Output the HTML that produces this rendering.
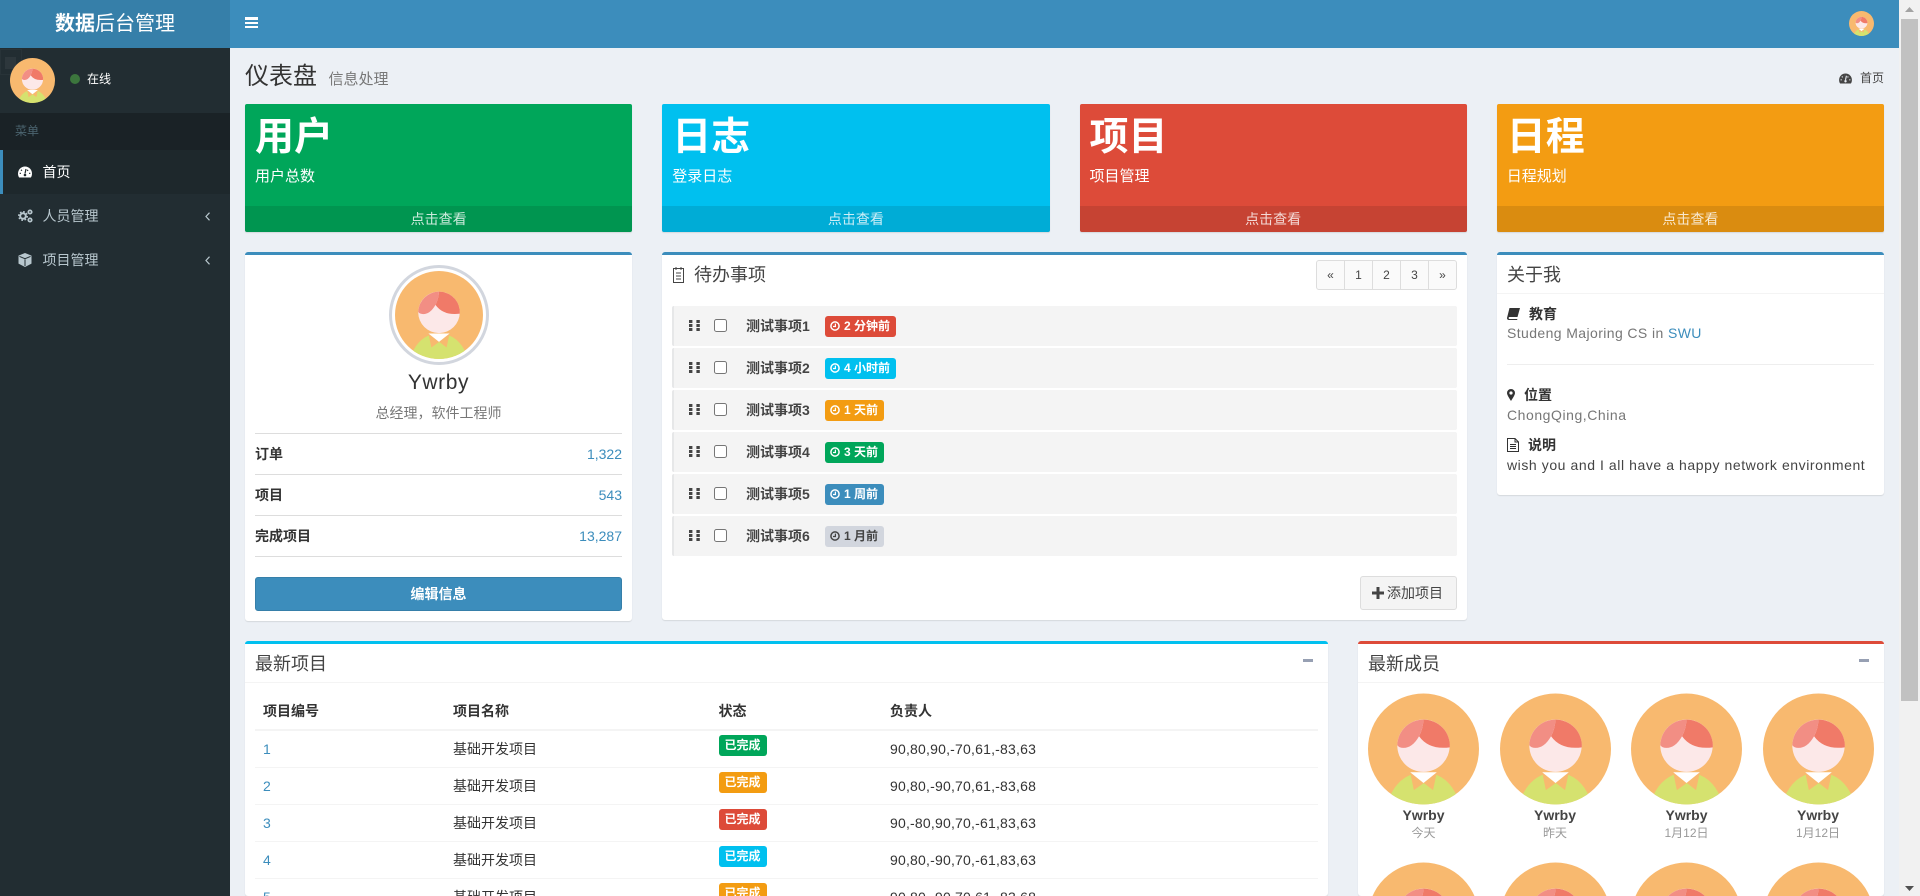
<!DOCTYPE html>
<html lang="zh-CN">
<head>
<meta charset="utf-8">
<title>数据后台管理</title>
<style>
*{box-sizing:border-box}
html,body{margin:0;padding:0;width:1920px;height:896px;overflow:hidden;background:#ecf0f5}
body{font-family:"Liberation Sans","Noto Sans CJK SC",sans-serif;font-size:14px;color:#333}
#p{position:absolute;left:0;top:0;width:1920px;height:896px;overflow:hidden;contain:paint}
.a{position:absolute}
.t{position:absolute;white-space:nowrap;line-height:20px;height:20px}
.cut{height:9px;overflow:hidden}
.c{text-align:center}
.r{text-align:right}
.b{font-weight:700}
.card{position:absolute;background:#fff;border-radius:3px;border-top:3px solid #3c8dbc;box-shadow:0 1px 1px rgba(0,0,0,.1)}
.sb{position:absolute;top:104px;height:128px;width:387.25px;border-radius:2px;box-shadow:0 1px 1px rgba(0,0,0,.1);color:#fff;overflow:hidden}
.sb h3{position:absolute;left:10px;top:12px;margin:0;font-size:39px;line-height:44px;font-weight:700;white-space:nowrap}
.sb p{position:absolute;left:10px;top:62px;margin:0;font-size:15px;line-height:22px;white-space:nowrap}
.sb div{position:absolute;left:0;right:0;top:102px;height:26px;line-height:26px;background:rgba(0,0,0,.1);color:rgba(255,255,255,.8);text-align:center;font-size:14px}
.line{position:absolute;height:1px;background:#ddd}
.line2{position:absolute;height:1px;background:#f4f4f4}
.item{position:absolute;left:672px;width:785px;height:40px;background:#f4f4f4;border-left:2px solid #e6e7e8;border-radius:2px}
.lb{position:absolute;height:21px;border-radius:3px;color:#fff;font-size:12px;font-weight:700;line-height:21px;white-space:nowrap}
.lb svg{position:absolute;left:5px;top:5px}
.lb span{position:absolute;left:19px;top:0}
.chk{position:absolute;left:714px;width:13px;height:13px;margin:0}
.pg{position:absolute;left:1316px;top:260px;width:141px;height:30px;display:flex;border:1px solid #ddd;border-radius:3px;background:#fafafa;color:#444;font-size:12px}
.pg span{flex:1;text-align:center;line-height:28px;border-left:1px solid #ddd}
.pg span:first-child{border-left:0}
.st{position:absolute;left:718.5px;width:48px;height:21px;border-radius:3px;color:#fff;font-size:12px;font-weight:700;line-height:21px;text-align:center;overflow:hidden}
.lnk{color:#3c8dbc}
.av{position:absolute;width:111px;height:112px}
.grey{color:#999}
.v{letter-spacing:.2px}
</style>
</head>
<body>
<div id="p">
<svg width="0" height="0" style="position:absolute">
<defs>
<symbol id="av" viewBox="0 0 100 100">
<clipPath id="cc"><circle cx="50" cy="50" r="50"/></clipPath>
<circle cx="50" cy="50" r="50" fill="#f8b96f"/>
<g clip-path="url(#cc)">
<path d="M17 100 Q24 77 42 72 L58 72 Q76 77 83 100Z" fill="#d5e26f"/>
<path d="M38 71 L41.3 87 L50.3 80.6 L58.6 87 L62 71Z" fill="#f8b96f"/>
<path d="M38 71 L62 71 L50 80.6Z" fill="#fff"/>
</g>
<circle cx="50" cy="47" r="23.6" fill="#fce8e8"/>
<path d="M50 23.500A23.700 23.700 0 0 1 73.700 48.500Q55 51 46 38.500Q49.500 32 50 23.500Z" fill="#f07a68"/>
<path d="M50 23.500Q49.500 32 46 38.500Q40 49 32 49Q28 49 26.400 46.500A23.700 23.700 0 0 1 50 23.500Z" fill="#f28e84"/>
</symbol>
<symbol id="ck" viewBox="0 0 10 10">
<circle cx="5" cy="5" r="4.100" fill="none" stroke="currentColor" stroke-width="1.500"/>
<path d="M5.400 2.600V5.500H3" fill="none" stroke="currentColor" stroke-width="1.200"/>
</symbol>
<symbol id="hd" viewBox="0 0 11 11">
<rect x="0" y="0" width="3.400" height="3" /><rect x="7.400" y="0" width="3.400" height="3"/>
<rect x="0" y="4" width="3.400" height="3"/><rect x="7.400" y="4" width="3.400" height="3"/>
<rect x="0" y="8" width="3.400" height="3"/><rect x="7.400" y="8" width="3.400" height="3"/>
</symbol>
<symbol id="dash" viewBox="0 0 14 12">
<path d="M7 0.500C3 0.500 0 3.800 0 7.600C0 9 .4 10.300 1.100 11.500H12.900C13.600 10.300 14 9 14 7.600C14 3.800 11 .5 7 .5Z" fill="currentColor"/>
<path d="M7 7.500L8 3M3 3.800l.9.9M1.700 7.400h1.200M11.100 7.400h1.200M10.100 3.900l-.9.9M5.700 2.200h.1" style="stroke:var(--h)" stroke-width="1.200" fill="none"/>
<circle cx="7" cy="9" r="1.300" style="fill:var(--h)"/>
</symbol>
</defs>
</svg>

<!-- sidebar -->
<div class="a" style="left:0;top:0;width:230px;height:896px;background:#222d32"></div>
<div class="a" style="left:0;top:0;width:230px;height:48px;background:#367fa9"></div>
<div class="a" style="left:230px;top:0;width:1669px;height:48px;background:#3c8dbc"></div>
<div class="t" style="left:55px;top:9px;height:30px;line-height:30px;font-size:20px;color:#fff"><b>数据</b>后台管理</div>
<div class="a" style="left:245px;top:17px;width:13px;height:2.500px;background:#fff"></div>
<div class="a" style="left:245px;top:21.500px;width:13px;height:2.500px;background:#fff"></div>
<div class="a" style="left:245px;top:25.500px;width:13px;height:2.500px;background:#fff"></div>
<svg class="a" style="left:1849px;top:11px" width="25" height="25"><use href="#av" width="25" height="25"/></svg>

<div class="a" style="left:0;top:49px;width:22px;height:26px;border:1px solid rgba(255,255,255,.03)"></div>
<div class="a" style="left:5px;top:57px;width:11px;height:12px;background:rgba(255,255,255,.05)"></div>
<svg class="a" style="left:10px;top:58px" width="45" height="45"><use href="#av" width="45" height="45"/></svg>
<div class="a" style="left:70px;top:74px;width:10px;height:10px;border-radius:50%;background:#3c763d"></div>
<div class="t" style="left:87px;top:69px;font-size:12px;color:#fff">在线</div>
<div class="a" style="left:0;top:113px;width:230px;height:37px;background:#1a2226"></div>
<div class="t" style="left:15px;top:121px;font-size:12px;color:#4b646f">菜单</div>
<div class="a" style="left:0;top:150px;width:230px;height:44px;background:#1e282c;border-left:3px solid #3c8dbc"></div>
<svg class="a" style="left:18px;top:166px;color:#fff;--h:#1e282c" width="14" height="12"><use href="#dash" width="14" height="12"/></svg>
<div class="t" style="left:42.500px;top:162px;color:#fff">首页</div>
<svg class="a" style="left:18px;top:209px" width="15" height="14" viewBox="0 0 15 14" fill="none" stroke="#b8c7ce">
<circle cx="5" cy="7" r="2.800" stroke-width="2"/>
<circle cx="5" cy="7" r="4.300" stroke-width="1.400" stroke-dasharray="1.700 1.670"/>
<circle cx="12" cy="3" r="1.700" stroke-width="1.700"/>
<circle cx="12" cy="11" r="1.700" stroke-width="1.700"/>
</svg>
<div class="t" style="left:42.500px;top:206px;color:#b8c7ce">人员管理</div>
<svg class="a" style="left:205px;top:212px" width="6" height="9" fill="none" stroke="#b8c7ce" stroke-width="1.200"><path d="M4.500 .7L1 4.500L4.500 8.300"/></svg>
<svg class="a" style="left:18px;top:253px" width="14" height="14" viewBox="0 0 14 14">
<path d="M7 0L13.500 2.600V10.600L7 14L.5 10.600V2.600Z" fill="#b8c7ce"/>
<path d="M7 6.400V13M1.500 3.400L7 5.700L12.500 3.400" stroke="#222d32" stroke-width="1" fill="none"/>
</svg>
<div class="t" style="left:42.500px;top:250px;color:#b8c7ce">项目管理</div>
<svg class="a" style="left:205px;top:256px" width="6" height="9" fill="none" stroke="#b8c7ce" stroke-width="1.200"><path d="M4.500 .7L1 4.500L4.500 8.300"/></svg>

<!-- page header -->
<div class="t" style="left:245px;top:62px;height:30px;line-height:30px;font-size:24px;color:#333">仪表盘</div>
<div class="t" style="left:328.500px;top:70px;font-size:15px;color:#777">信息处理</div>
<svg class="a" style="left:1839px;top:73px;color:#444;--h:#ecf0f5" width="13" height="11"><use href="#dash" width="13" height="11"/></svg>
<div class="t" style="left:1860px;top:68px;font-size:12px;color:#444">首页</div>

<!-- small boxes -->
<div class="sb" style="left:245px;background:#00a65a"><h3>用户</h3><p>用户总数</p><div>点击查看</div></div>
<div class="sb" style="left:662.250px;background:#00c0ef"><h3>日志</h3><p>登录日志</p><div>点击查看</div></div>
<div class="sb" style="left:1079.500px;background:#dd4b39"><h3>项目</h3><p>项目管理</p><div>点击查看</div></div>
<div class="sb" style="left:1496.750px;background:#f39c12"><h3>日程</h3><p>日程规划</p><div>点击查看</div></div>

<!-- profile -->
<div class="card" style="left:245px;top:252px;width:387px;height:369px"></div>
<div class="a" style="left:389px;top:265px;width:100px;height:100px;border-radius:50%;border:3px solid #d2d6de;padding:3px;background:#fff"><svg width="88" height="88" style="display:block"><use href="#av" width="88" height="88"/></svg></div>
<div class="t c" style="left:245px;width:387px;top:368px;height:30px;line-height:30px;font-size:21px;color:#333;letter-spacing:.6px">Ywrby</div>
<div class="t c" style="left:245px;width:387px;top:403px;color:#777">总经理，软件工程师</div>
<div class="line" style="left:255px;top:433px;width:367px"></div>
<div class="line" style="left:255px;top:474px;width:367px"></div>
<div class="line" style="left:255px;top:515px;width:367px"></div>
<div class="line" style="left:255px;top:556px;width:367px"></div>
<div class="t b" style="left:255px;top:444px">订单</div>
<div class="t b" style="left:255px;top:485px">项目</div>
<div class="t b" style="left:255px;top:526px">完成项目</div>
<div class="t r lnk" style="left:522px;width:100px;top:444px">1,322</div>
<div class="t r lnk" style="left:522px;width:100px;top:485px">543</div>
<div class="t r lnk" style="left:522px;width:100px;top:526px">13,287</div>
<div class="a c b" style="left:255px;top:577px;width:367px;height:34px;line-height:32px;background:#3c8dbc;border:1px solid #367fa9;border-radius:3px;color:#fff">编辑信息</div>

<!-- todo -->
<div class="card" style="left:662.250px;top:252px;width:804.750px;height:368px"></div>
<svg class="a" style="left:672px;top:267px" width="13" height="16" viewBox="0 0 13 16" fill="none" stroke="#444">
<rect x="1.500" y="1.500" width="10" height="14"/><path d="M4 0V3M9 0V3M4 6H9M4 9H9M4 12H9"/></svg>
<div class="t" style="left:694px;top:263px;height:24px;line-height:24px;font-size:18px;color:#444">待办事项</div>
<div class="pg"><span>«</span><span>1</span><span>2</span><span>3</span><span>»</span></div>

<div class="item" style="top:306px"></div>
<div class="item" style="top:348px"></div>
<div class="item" style="top:390px"></div>
<div class="item" style="top:432px"></div>
<div class="item" style="top:474px"></div>
<div class="item" style="top:516px"></div>

<svg class="a" style="left:689px;top:320px;fill:#444" width="11" height="11"><use href="#hd" width="11" height="11"/></svg>
<svg class="a" style="left:689px;top:362px;fill:#444" width="11" height="11"><use href="#hd" width="11" height="11"/></svg>
<svg class="a" style="left:689px;top:404px;fill:#444" width="11" height="11"><use href="#hd" width="11" height="11"/></svg>
<svg class="a" style="left:689px;top:446px;fill:#444" width="11" height="11"><use href="#hd" width="11" height="11"/></svg>
<svg class="a" style="left:689px;top:488px;fill:#444" width="11" height="11"><use href="#hd" width="11" height="11"/></svg>
<svg class="a" style="left:689px;top:530px;fill:#444" width="11" height="11"><use href="#hd" width="11" height="11"/></svg>

<input type="checkbox" class="chk" style="top:319px">
<input type="checkbox" class="chk" style="top:361px">
<input type="checkbox" class="chk" style="top:403px">
<input type="checkbox" class="chk" style="top:445px">
<input type="checkbox" class="chk" style="top:487px">
<input type="checkbox" class="chk" style="top:529px">

<div class="t b" style="left:746px;top:316px;color:#444">测试事项1</div>
<div class="t b" style="left:746px;top:358px;color:#444">测试事项2</div>
<div class="t b" style="left:746px;top:400px;color:#444">测试事项3</div>
<div class="t b" style="left:746px;top:442px;color:#444">测试事项4</div>
<div class="t b" style="left:746px;top:484px;color:#444">测试事项5</div>
<div class="t b" style="left:746px;top:526px;color:#444">测试事项6</div>

<div class="lb" style="left:825px;top:316px;width:71px;background:#dd4b39"><svg width="10" height="10"><use href="#ck" width="10" height="10"/></svg><span>2 分钟前</span></div>
<div class="lb" style="left:825px;top:358px;width:71px;background:#00c0ef"><svg width="10" height="10"><use href="#ck" width="10" height="10"/></svg><span>4 小时前</span></div>
<div class="lb" style="left:825px;top:400px;width:59px;background:#f39c12"><svg width="10" height="10"><use href="#ck" width="10" height="10"/></svg><span>1 天前</span></div>
<div class="lb" style="left:825px;top:442px;width:59px;background:#00a65a"><svg width="10" height="10"><use href="#ck" width="10" height="10"/></svg><span>3 天前</span></div>
<div class="lb" style="left:825px;top:484px;width:59px;background:#3c8dbc"><svg width="10" height="10"><use href="#ck" width="10" height="10"/></svg><span>1 周前</span></div>
<div class="lb" style="left:825px;top:526px;width:59px;background:#d2d6de;color:#444"><svg width="10" height="10"><use href="#ck" width="10" height="10"/></svg><span>1 月前</span></div>

<div class="a" style="left:1360px;top:576px;width:97px;height:34px;background:#f4f4f4;border:1px solid #ddd;border-radius:3px"></div>
<svg class="a" style="left:1372px;top:587px" width="12" height="12"><path d="M4.500 0H7.500V4.500H12V7.500H7.500V12H4.500V7.500H0V4.500H4.500Z" fill="#444"/></svg>
<div class="t" style="left:1387px;top:583px;color:#444">添加项目</div>

<!-- about -->
<div class="card" style="left:1496.750px;top:252px;width:387.250px;height:243px"></div>
<div class="t" style="left:1507px;top:262.500px;height:24px;line-height:24px;font-size:18px;color:#444">关于我</div>
<div class="line2" style="left:1497px;top:293px;width:387px"></div>
<svg class="a" style="left:1507px;top:308px" width="13" height="12" viewBox="0 0 13 12"><path d="M2.500 0H13L10.500 9H2.500Q1.600 9 1.600 10T2.500 11H10.500L10 12H2Q0 12 0 10Z" fill="#333"/></svg>
<div class="t b" style="left:1529px;top:304px">教育</div>
<div class="t" style="left:1507px;top:323px;color:#777;letter-spacing:.4px">Studeng Majoring CS in <span class="lnk">SWU</span></div>
<div class="line2" style="left:1507px;top:364px;width:367px;background:#eee"></div>
<svg class="a" style="left:1507px;top:389px" width="8" height="12" viewBox="0 0 8 12"><path fill-rule="evenodd" d="M4 0A4 4 0 0 0 0 4C0 6 2.500 9.500 4 12C5.500 9.500 8 6 8 4A4 4 0 0 0 4 0ZM4 2.400A1.600 1.600 0 1 1 4 5.600A1.600 1.600 0 1 1 4 2.400Z" fill="#333"/></svg>
<div class="t b" style="left:1524px;top:385px">位置</div>
<div class="t" style="left:1507px;top:405px;color:#777;letter-spacing:.55px">ChongQing,China</div>
<svg class="a" style="left:1507px;top:438px" width="12" height="14" viewBox="0 0 12 14" fill="none" stroke="#333"><path d="M.5 .5H8L11.500 4V13.500H.5ZM8 .5V4H11.500M3 6.500H9M3 8.500H9M3 10.500H9"/></svg>
<div class="t b" style="left:1528px;top:435px">说明</div>
<div class="t" style="left:1507px;top:455px;color:#444;letter-spacing:.57px">wish you and I all have a happy network environment</div>

<!-- latest projects -->
<div class="card" style="left:245px;top:641px;width:1083px;height:255px;border-top-color:#00c0ef"></div>
<div class="t" style="left:255px;top:651.500px;height:24px;line-height:24px;font-size:18px;color:#444">最新项目</div>
<div class="a" style="left:1303px;top:659px;width:10px;height:3px;background:#97a0b3"></div>
<div class="line2" style="left:245px;top:682px;width:1083px"></div>
<div class="t b" style="left:263px;top:701px">项目编号</div>
<div class="t b" style="left:453px;top:701px">项目名称</div>
<div class="t b" style="left:718.500px;top:701px">状态</div>
<div class="t b" style="left:890px;top:701px">负责人</div>
<div class="a" style="left:255px;top:729px;width:1063px;height:2px;background:#f4f4f4"></div>
<div class="line2" style="left:255px;top:767px;width:1063px"></div>
<div class="line2" style="left:255px;top:804px;width:1063px"></div>
<div class="line2" style="left:255px;top:841px;width:1063px"></div>
<div class="line2" style="left:255px;top:878px;width:1063px"></div>

<div class="t lnk" style="left:263px;top:739px">1</div>
<div class="t lnk" style="left:263px;top:776px">2</div>
<div class="t lnk" style="left:263px;top:813px">3</div>
<div class="t lnk" style="left:263px;top:850px">4</div>
<div class="t lnk cut" style="left:263px;top:887px">5</div>
<div class="t" style="left:453px;top:739px">基础开发项目</div>
<div class="t" style="left:453px;top:776px">基础开发项目</div>
<div class="t" style="left:453px;top:813px">基础开发项目</div>
<div class="t" style="left:453px;top:850px">基础开发项目</div>
<div class="t cut" style="left:453px;top:887px">基础开发项目</div>
<div class="st" style="top:735px;background:#00a65a">已完成</div>
<div class="st" style="top:772px;background:#f39c12">已完成</div>
<div class="st" style="top:809px;background:#dd4b39">已完成</div>
<div class="st" style="top:846px;background:#00c0ef">已完成</div>
<div class="st" style="top:883px;height:13px;border-radius:3px 3px 0 0;background:#f39c12">已完成</div>
<div class="t v" style="left:890px;top:739px">90,80,90,-70,61,-83,63</div>
<div class="t v" style="left:890px;top:776px">90,80,-90,70,61,-83,68</div>
<div class="t v" style="left:890px;top:813px">90,-80,90,70,-61,83,63</div>
<div class="t v" style="left:890px;top:850px">90,80,-90,70,-61,83,63</div>
<div class="t v cut" style="left:890px;top:887px">90,80,-90,70,61,-83,68</div>

<!-- latest members -->
<div class="card" style="left:1358px;top:641px;width:526px;height:255px;border-top-color:#dd4b39"></div>
<div class="t" style="left:1368px;top:651.500px;height:24px;line-height:24px;font-size:18px;color:#444">最新成员</div>
<div class="a" style="left:1859px;top:659px;width:10px;height:3px;background:#97a0b3"></div>
<div class="line2" style="left:1358px;top:682px;width:526px"></div>

<svg class="av" style="left:1368px;top:693px"><use href="#av" width="111" height="112"/></svg>
<svg class="av" style="left:1499.500px;top:693px"><use href="#av" width="111" height="112"/></svg>
<svg class="av" style="left:1631px;top:693px"><use href="#av" width="111" height="112"/></svg>
<svg class="av" style="left:1762.500px;top:693px"><use href="#av" width="111" height="112"/></svg>
<div class="t c b" style="left:1368px;width:111px;top:805px;color:#444">Ywrby</div>
<div class="t c b" style="left:1499.500px;width:111px;top:805px;color:#444">Ywrby</div>
<div class="t c b" style="left:1631px;width:111px;top:805px;color:#444">Ywrby</div>
<div class="t c b" style="left:1762.500px;width:111px;top:805px;color:#444">Ywrby</div>
<div class="t c grey" style="left:1368px;width:111px;top:823px;font-size:12px">今天</div>
<div class="t c grey" style="left:1499.500px;width:111px;top:823px;font-size:12px">昨天</div>
<div class="t c grey" style="left:1631px;width:111px;top:823px;font-size:12px">1月12日</div>
<div class="t c grey" style="left:1762.500px;width:111px;top:823px;font-size:12px">1月12日</div>
<svg class="av" style="left:1368px;top:862px;height:34px"><use href="#av" width="111" height="112"/></svg>
<svg class="av" style="left:1499.500px;top:862px;height:34px"><use href="#av" width="111" height="112"/></svg>
<svg class="av" style="left:1631px;top:862px;height:34px"><use href="#av" width="111" height="112"/></svg>
<svg class="av" style="left:1762.500px;top:862px;height:34px"><use href="#av" width="111" height="112"/></svg>

<!-- scrollbar -->
<div class="a" style="left:1899px;top:0;width:21px;height:896px;background:#f1f1f1"></div>
<div class="a" style="left:1901px;top:19px;width:17px;height:682px;background:#c1c1c1"></div>
<svg class="a" style="left:1904px;top:6px" width="11" height="7"><path d="M1 6L5.500 1L10 6Z" fill="#a3a3a3"/></svg>
<svg class="a" style="left:1904px;top:885px" width="11" height="7"><path d="M1 1L5.500 6L10 1Z" fill="#505050"/></svg>
</div>
</body>
</html>
